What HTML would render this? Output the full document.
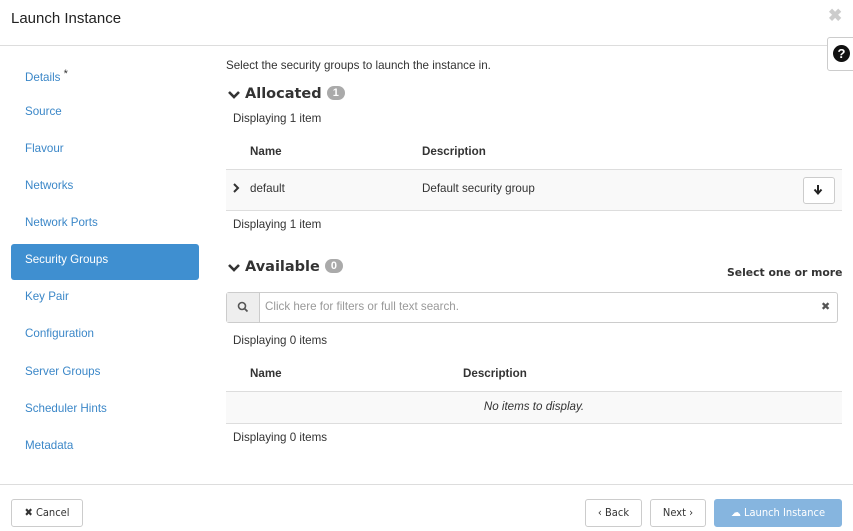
<!DOCTYPE html>
<html><head><style>
*{box-sizing:border-box;margin:0;padding:0}
body{width:853px;height:531px;background:#fff;font-family:"Liberation Sans",sans-serif;font-size:11.6px;color:#333;position:relative;overflow:hidden}
.a{position:absolute;white-space:nowrap}
.nav{left:25px;color:#3b87c8;font-size:11.6px}
.h{font-family:"DejaVu Sans",sans-serif;font-weight:bold;font-size:14.5px;color:#333}
.badge{display:inline-block;background:#aaa;color:#fff;border-radius:9px;font-size:11px;padding:1px 6px;vertical-align:2px;font-weight:bold;font-family:"Liberation Sans",sans-serif}
.btn{position:absolute;border:1px solid #ccc;border-radius:3px;background:#fff;font-family:"DejaVu Sans Condensed","DejaVu Sans",sans-serif;font-size:11px;color:#333;text-align:center;line-height:26px;height:28px}
.th{font-weight:bold}
</style></head><body>
<div class="a" style="left:11px;top:10px;font-size:15px;color:#222">Launch Instance</div>
<div class="a" style="left:828px;top:6px;font-size:17px;color:#ccc;font-weight:bold">✖</div>
<div class="a" style="left:0;top:45px;width:853px;height:1px;background:#ddd"></div>
<div class="a" style="left:827px;top:37px;width:30px;height:34px;border:1px solid #ccc;border-radius:3px;background:#fff"></div>
<div class="a" style="left:833px;top:45px;width:17px;height:17px;border-radius:50%;background:#111;color:#fff;font-weight:bold;font-size:13px;text-align:center;line-height:17px">?</div>

<div class="a nav" style="top:68px">Details <span style="color:#333;font-size:11px;vertical-align:4px">*</span></div>
<div class="a nav" style="top:105px">Source</div>
<div class="a nav" style="top:142px">Flavour</div>
<div class="a nav" style="top:179px">Networks</div>
<div class="a nav" style="top:216px">Network Ports</div>
<div class="a" style="left:11px;top:244px;width:188px;height:36px;background:#3f8fd0;border-radius:3px"></div>
<div class="a nav" style="top:253px;color:#fff">Security Groups</div>
<div class="a nav" style="top:290px">Key Pair</div>
<div class="a nav" style="top:327px">Configuration</div>
<div class="a nav" style="top:365px">Server Groups</div>
<div class="a nav" style="top:402px">Scheduler Hints</div>
<div class="a nav" style="top:439px">Metadata</div>

<div class="a" style="left:226px;top:59px">Select the security groups to launch the instance in.</div>
<svg class="a" style="left:227px;top:90px" width="14" height="10"><path d="M2 2l5 5 5-5" stroke="#333" stroke-width="2.6" fill="none"/></svg>
<div class="a h" style="left:245px;top:86px">Allocated <span class="badge">1</span></div>
<div class="a" style="left:233px;top:112px">Displaying 1 item</div>
<div class="a th" style="left:250px;top:145px">Name</div>
<div class="a th" style="left:422px;top:145px">Description</div>
<div class="a" style="left:226px;top:169px;width:616px;height:42px;background:#f9f9f9;border-top:1px solid #ddd;border-bottom:1px solid #ddd"></div>
<svg class="a" style="left:232px;top:183px" width="8" height="10"><path d="M2 1l4 4-4 4" stroke="#333" stroke-width="2" fill="none"/></svg>
<div class="a" style="left:250px;top:182px">default</div>
<div class="a" style="left:422px;top:182px">Default security group</div>
<div class="a" style="left:803px;top:177px;width:32px;height:27px;border:1px solid #ccc;border-radius:3px;background:#fff"></div>
<svg class="a" style="left:813px;top:184px" width="10" height="12"><path d="M5 1v8M1.5 5.5l3.5 4 3.5-4" stroke="#222" stroke-width="2" fill="none"/></svg>
<div class="a" style="left:233px;top:218px">Displaying 1 item</div>

<svg class="a" style="left:227px;top:263px" width="14" height="10"><path d="M2 2l5 5 5-5" stroke="#333" stroke-width="2.6" fill="none"/></svg>
<div class="a h" style="left:245px;top:259px">Available <span class="badge">0</span></div>
<div class="a" style="left:727px;top:266px;font-family:'DejaVu Sans',sans-serif;font-weight:bold;font-size:10.8px">Select one or more</div>
<div class="a" style="left:226px;top:292px;width:612px;height:31px;border:1px solid #ccc;border-radius:3px"></div>
<div class="a" style="left:227px;top:293px;width:33px;height:29px;background:#eee;border-right:1px solid #ccc"></div>
<svg class="a" style="left:237px;top:301px" width="12" height="12"><circle cx="5" cy="5" r="3.5" stroke="#555" stroke-width="1.6" fill="none"/><path d="M7.5 7.5l3 3" stroke="#555" stroke-width="1.8"/></svg>
<div class="a" style="left:265px;top:300px;color:#999">Click here for filters or full text search.</div>
<div class="a" style="left:821px;top:300px;color:#555;font-size:11px">✖</div>
<div class="a" style="left:233px;top:334px">Displaying 0 items</div>
<div class="a th" style="left:250px;top:367px">Name</div>
<div class="a th" style="left:463px;top:367px">Description</div>
<div class="a" style="left:226px;top:391px;width:616px;height:33px;background:#f9f9f9;border-top:1px solid #ddd;border-bottom:1px solid #ddd"></div>
<div class="a" style="left:226px;top:400px;width:616px;text-align:center;font-style:italic">No items to display.</div>
<div class="a" style="left:233px;top:431px">Displaying 0 items</div>

<div class="a" style="left:0;top:484px;width:853px;height:1px;background:#ddd"></div>
<div class="btn" style="left:11px;top:499px;width:72px"><b>✖</b> Cancel</div>
<div class="btn" style="left:585px;top:499px;width:57px">‹ Back</div>
<div class="btn" style="left:650px;top:499px;width:56px">Next ›</div>
<div class="btn" style="left:714px;top:499px;width:128px;background:#86b5df;border-color:#86b5df;color:#fff">☁ Launch Instance</div>
</body></html>
